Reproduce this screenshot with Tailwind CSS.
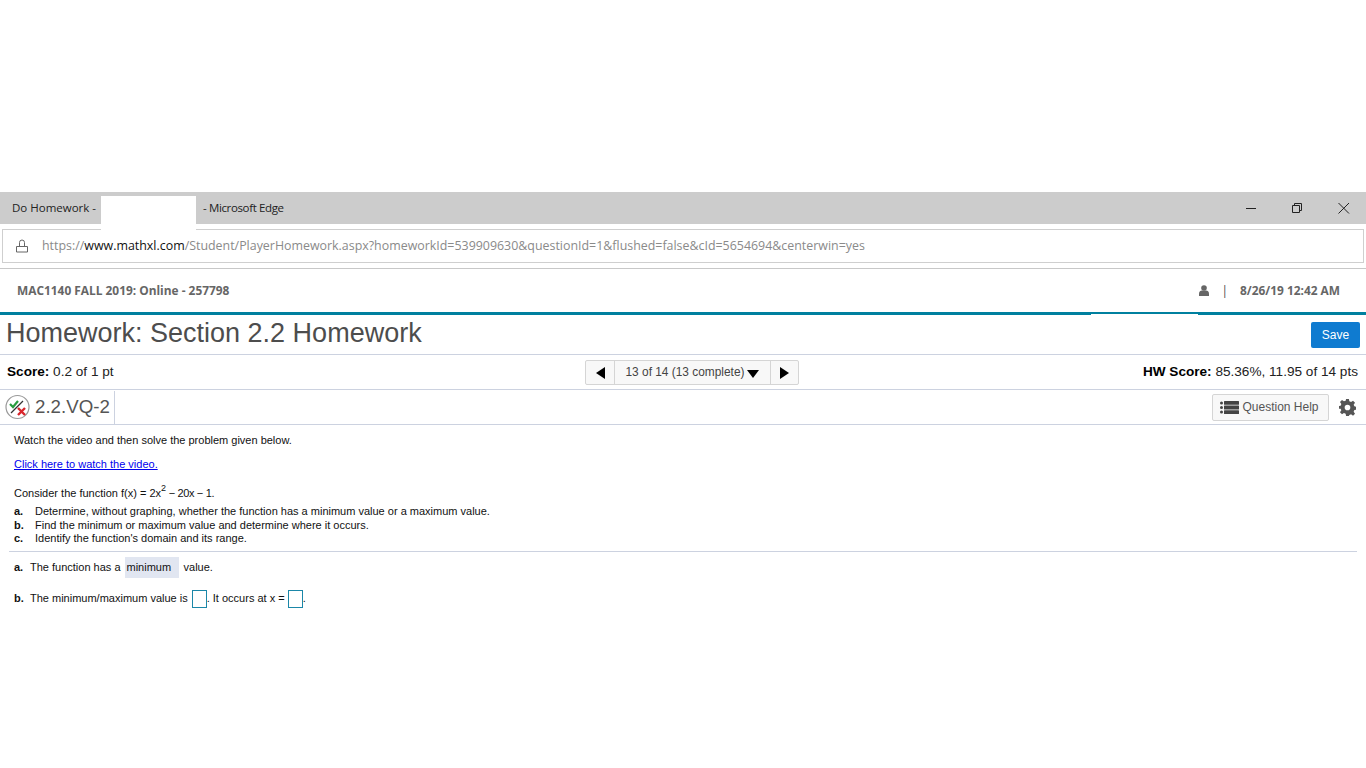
<!DOCTYPE html>
<html>
<head>
<meta charset="utf-8">
<script src="https://cdn.jsdelivr.net/npm/@tailwindcss/browser@4"></script>
</head>
<body class="bg-white w-[1366px] h-[768px] overflow-hidden font-['Liberation_Sans',sans-serif]">
<div class="h-[192px]"></div>
<div class="relative">
  <div class="absolute left-[101px] top-[4px] w-[95px] h-[34px] bg-white z-10"></div>
  <div class="h-[32px] bg-[#cccccc] flex items-center pl-[12px] text-[11.500px] text-[#222] font-['Open_Sans',sans-serif]">
    <span>Do Homework -</span><span class="ml-[107px] tracking-[-0.37px]">- Microsoft Edge</span>
    <div class="ml-auto flex items-center">
      <svg class="w-[46px] h-[32px]" viewBox="0 0 46 32"><path d="M17 16.500h10" stroke="#222" stroke-width="1" fill="none"/></svg>
      <svg class="w-[46px] h-[32px]" viewBox="0 0 46 32" fill="none" stroke="#222" stroke-width="1"><path d="M17.500 13.500h7v7h-7z"/><path d="M19.500 13.500v-2h7v7h-2"/></svg>
      <svg class="w-[46px] h-[32px] mr-[-1px]" viewBox="0 0 46 32" fill="none" stroke="#222" stroke-width="1"><path d="M17.500 11l10.500 10.500M28 11l-10.500 10.500"/></svg>
    </div>
  </div>
  <div class="h-[45px] bg-white pt-[5px] px-[2px] border-b border-[#c8c8c8]">
    <div class="h-[34px] border border-[#cfcfcf] flex items-center pl-[13px] text-[12.420px] text-[#8a8a8a] font-['Open_Sans',sans-serif]">
      <svg class="w-[12px] h-[14px] mr-[14px]" viewBox="0 0 12 14" fill="none" stroke="#666" stroke-width="1"><path d="M.500 7.500h11v5.500h-11z"/><path d="M3.500 7.500v-4a2.500 2.500 0 0 1 5 0v4"/></svg>
      <span class="mt-[1px]">https://<span class="text-[#111]">www.mathxl.com</span>/Student/PlayerHomework.aspx?homeworkId=539909630&amp;questionId=1&amp;flushed=false&amp;cId=5654694&amp;centerwin=yes</span>
    </div>
  </div>
</div>
<div class="h-[46px] flex items-center pl-[17px] pr-[26px] text-[11.900px] font-bold text-[#666] font-['Open_Sans',sans-serif] border-b-[3px] border-[#00809f] relative">
  <span>MAC1140 FALL 2019: Online - 257798</span>
  <div class="ml-auto flex items-center">
    <svg class="w-[10px] h-[11px]" viewBox="0 0 10 11" fill="#666"><circle cx="5" cy="3" r="2.800"/><path d="M0 11v-2.500c0-2 1.500-3 2.800-3h4.400c1.300 0 2.800 1 2.800 3v2.500z"/></svg>
    <span class="ml-[12px] font-normal text-[#444]">|</span>
    <span class="ml-[12px]">8/26/19 12:42 AM</span>
  </div>
  <div class="absolute left-[1091px] bottom-[-3px] w-[107px] h-[1px] bg-white"></div>
</div>
<div class="h-[40px] flex items-center pl-[6px] pr-[6px] border-b border-[#ccd2e0]">
  <span class="text-[27px] text-[#4d4d4d] leading-none mt-[-2px]">Homework: Section 2.2 Homework</span>
  <button class="ml-auto w-[49px] h-[26px] bg-[#0f7bd0] text-white text-[12px] rounded-[2px]">Save</button>
</div>
<div class="h-[35px] flex items-center justify-between pl-[7px] pr-[8px] border-b border-[#ccd2e0] text-[13.600px] text-[#222] relative">
  <span><b class="text-black">Score:</b> 0.2 of 1 pt</span>
  <span><b class="text-black">HW Score:</b> 85.36%, 11.95 of 14 pts</span>
  <div class="absolute left-[585px] top-[5px] h-[25px] w-[214px] flex border border-[#d5d5d5] rounded-[2px] bg-[#f8f8f8] text-[11.900px] text-[#444]">
    <div class="w-[29px] border-r border-[#d5d5d5] flex items-center justify-center"><svg class="w-[9px] h-[12px]" viewBox="0 0 9 12"><path d="M9 0v12L0 6z" fill="#000"/></svg></div>
    <div class="flex-1 flex items-center justify-center gap-[3px]">13 of 14 (13 complete)<svg class="w-[12px] h-[8px] mt-[2px]" viewBox="0 0 12 8"><path d="M0 0h12L6 8z" fill="#000"/></svg></div>
    <div class="w-[28px] border-l border-[#d5d5d5] flex items-center justify-center"><svg class="w-[9px] h-[12px]" viewBox="0 0 9 12"><path d="M0 0v12l9-6z" fill="#000"/></svg></div>
  </div>
</div>
<div class="h-[35px] flex items-center pl-[5px] pr-[10px] border-b border-[#ccd2e0]">
  <svg class="w-[26px] h-[26px]" viewBox="0 0 26 26" fill="none">
    <circle cx="12.500" cy="13" r="11.500" fill="#fff" stroke="#999" stroke-width="1.200"/>
    <path d="M5 10l3 3 5-6" stroke="#2a9d3f" stroke-width="2.200"/>
    <path d="M6 19L18 7" stroke="#333" stroke-width="1.300"/>
    <path d="M13 14l7 7M20 14l-7 7" stroke="#d9262c" stroke-width="2.400"/>
  </svg>
  <span class="ml-[4px] text-[18.700px] text-[#555] w-[80px] h-[33px] leading-[31px] whitespace-nowrap border-r border-[#ccd2e0]">2.2.VQ-2</span>
  <button class="ml-auto h-[27px] w-[117px] border border-[#d5d5d5] rounded-[2px] bg-[#f8f8f8] text-[12px] text-[#555] flex items-center justify-center gap-[3px]">
    <svg class="w-[19px] h-[13px]" viewBox="0 0 19 13" fill="#444"><circle cx="1.500" cy="2" r="1.500"/><circle cx="1.500" cy="6.500" r="1.500"/><circle cx="1.500" cy="11" r="1.500"/><rect x="4" y="0" width="15" height="3.800" rx=".5"/><rect x="4" y="4.600" width="15" height="3.800" rx=".5"/><rect x="4" y="9.200" width="15" height="3.800" rx=".5"/></svg>
    <span class="mr-[2px]">Question Help</span>
  </button>
  <svg class="ml-[10px] w-[17px] h-[17px]" viewBox="0 0 24 24" fill="#555"><path fill-rule="evenodd" d="M10 0h4l.6 3.300 2.400 1 2.800-1.900 2.800 2.800-1.900 2.800 1 2.400 3.300.6v4l-3.300.6-1 2.400 1.900 2.800-2.800 2.800-2.800-1.900-2.400 1L14 24h-4l-.6-3.300-2.400-1-2.800 1.900-2.800-2.800 1.900-2.800-1-2.400L-1 14v-4l3.300-.6 1-2.400-1.900-2.800 2.800-2.800 2.800 1.900 2.400-1zM12 8a4 4 0 1 0 0 8 4 4 0 0 0 0-8z"/></svg>
</div>
<div class="px-[9px] text-[11px] text-[#111] leading-[13px]">
  <div class="pl-[5px] pt-[9px]">Watch the video and then solve the problem given below.</div>
  <div class="pl-[5px] mt-[11px]"><a class="text-[#0000ee] underline">Click here to watch the video.</a></div>
  <div class="pl-[5px] mt-[14px]">Consider the function f(x) = 2x<sup class="text-[9px] leading-none relative top-[-1px] align-super">2</sup><span class="tracking-[-0.36px]"> &minus; 20x &minus; 1.</span></div>
  <div class="pl-[5px] mt-[5px] flex"><b class="w-[21px] font-bold">a.</b><span>Determine, without graphing, whether the function has a minimum value or a maximum value.</span></div>
  <div class="pl-[5px] mt-[1px] flex"><b class="w-[21px] font-bold">b.</b><span>Find the minimum or maximum value and determine where it occurs.</span></div>
  <div class="pl-[5px] flex"><b class="w-[21px] font-bold">c.</b><span>Identify the function's domain and its range.</span></div>
  <div class="mt-[6px] border-t border-[#ccd2e0]"></div>
  <div class="pl-[5px] mt-[5px] flex items-center h-[21px]"><b class="w-[16px]">a.</b><span>The function has a</span><span class="ml-[4px] w-[54px] h-[21px] leading-[21px] pl-[2px] bg-[#e1e6f1]">minimum</span><span class="ml-[5px]">value.</span></div>
  <div class="pl-[5px] mt-[12px] flex items-center h-[18px]"><b class="w-[16px]">b.</b><span>The minimum/maximum value is</span><span class="ml-[4px] w-[15px] h-[18px] border border-[#1b87a8]"></span><span>. It occurs at x =</span><span class="ml-[3px] w-[15px] h-[18px] border border-[#1b87a8]"></span><span>.</span></div>
</div>
</body>
</html>
